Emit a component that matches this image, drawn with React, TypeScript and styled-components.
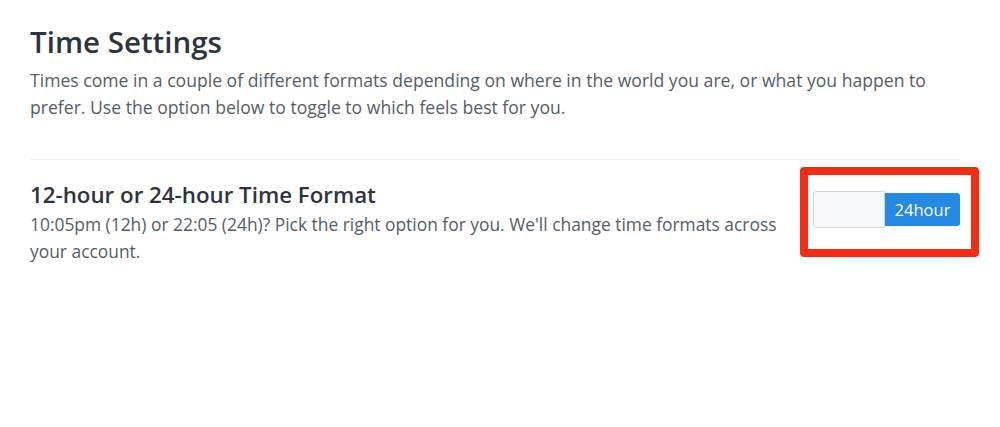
import styled, { createGlobalStyle } from 'styled-components';

const GlobalStyle = createGlobalStyle`
  html, body {
    margin: 0;
    padding: 0;
    background: #ffffff;
  }
  body {
    font-family: "Open Sans", "Noto Sans", "Liberation Sans", sans-serif;
    -webkit-font-smoothing: antialiased;
  }
`;

const Page = styled.main`
  width: 930px;
  padding: 24px 40px 40px 30px;
`;

const Title = styled.h1`
  margin: 0;
  font-size: 29.5px;
  line-height: 36px;
  font-weight: 600;
  color: #2c343d;
`;

const Intro = styled.p`
  margin: 7px 0 0;
  font-size: 17.6px;
  line-height: 27px;
  color: #545d66;
`;

const Divider = styled.hr`
  margin: 38px 0 0;
  border: 0;
  border-top: 1px solid #eef0f2;
`;

const SettingRow = styled.section`
  display: flex;
  justify-content: space-between;
  align-items: flex-start;
  padding-top: 21px;
`;

const SettingText = styled.div`
  width: 770px;
`;

const SettingTitle = styled.h2`
  margin: 0;
  font-size: 22.3px;
  line-height: 28px;
  font-weight: 600;
  color: #2c343d;
`;

const SettingHint = styled.p`
  margin: 2px 0 0;
  font-size: 17.4px;
  line-height: 27px;
  color: #545d66;
`;

const ToggleWrap = styled.div`
  position: relative;
  margin-top: 10px;
`;

// red annotation drawn round the toggle
const Highlight = styled.div`
  position: absolute;
  top: -24px;
  left: -13px;
  right: -19px;
  bottom: -29px;
  border: 8px solid #f42c12;
  border-radius: 4px;
  pointer-events: none;
`;

const Toggle = styled.div`
  display: flex;
  align-items: center;
`;

const Segment = styled.button<{ $active?: boolean }>`
  box-sizing: border-box;
  font-family: inherit;
  font-size: 16.5px;
  border: ${({ $active }) => ($active ? '0' : '1px solid #cfd6dd')};
  background: ${({ $active }) => ($active ? '#2389e2' : '#f6f8fa')};
  color: #ffffff;
  width: ${({ $active }) => ($active ? '75px' : '72px')};
  height: ${({ $active }) => ($active ? '33px' : '37px')};
  border-radius: ${({ $active }) => ($active ? '0 3px 3px 0' : '3px 0 0 3px')};
  padding: 0;
  cursor: pointer;
`;

export default function App() {
  return (
    <>
      <GlobalStyle />
      <Page>
        <Title>Time Settings</Title>
        <Intro>
          Times come in a couple of different formats depending on where in the world you are, or what you happen to
          prefer. Use the option below to toggle to which feels best for you.
        </Intro>
        <Divider />
        <SettingRow>
          <SettingText>
            <SettingTitle>12-hour or 24-hour Time Format</SettingTitle>
            <SettingHint>
              10:05pm (12h) or 22:05 (24h)? Pick the right option for you. We'll change time formats across your
              account.
            </SettingHint>
          </SettingText>
          <ToggleWrap>
            <Toggle>
              <Segment />
              <Segment $active>24hour</Segment>
            </Toggle>
            <Highlight />
          </ToggleWrap>
        </SettingRow>
      </Page>
    </>
  );
}
